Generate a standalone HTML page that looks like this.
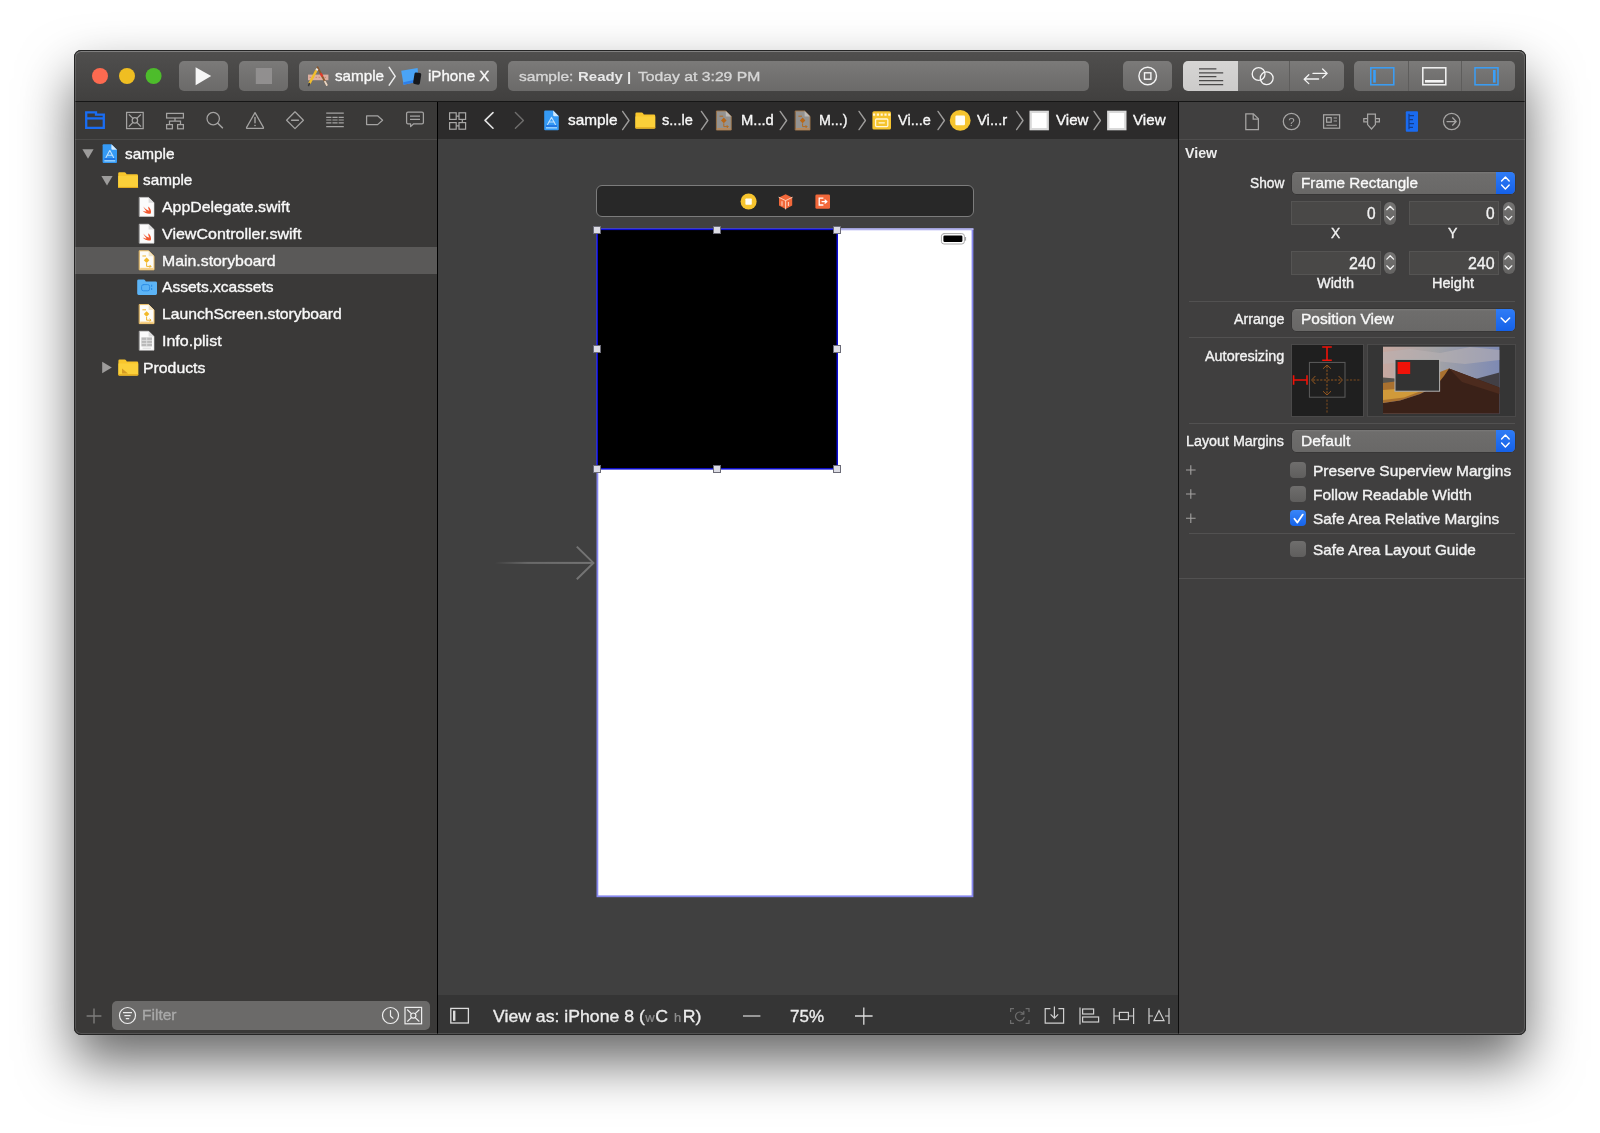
<!DOCTYPE html>
<html lang="en">
<head>
<meta charset="utf-8">
<title>sample — Main.storyboard</title>
<style>
html,body{margin:0;padding:0}
body{width:1600px;height:1133px;background:#fff;position:relative;overflow:hidden;font-family:"Liberation Sans",sans-serif}
#root{position:absolute;left:0;top:0;width:1600px;height:1133px;will-change:transform}
.a,.t,svg{position:absolute}
.t{white-space:pre;transform-origin:0 50%;-webkit-text-stroke:.35px currentColor}
#shadow{left:74px;top:50px;width:1452px;height:985px;border-radius:7px;
 box-shadow:0 27px 54px rgba(0,0,0,.6)}
#win{left:74px;top:50px;width:1452px;height:985px;border-radius:7px;overflow:hidden;background:#3a3938}
#win>*{position:absolute}
#frame{left:74px;top:50px;width:1452px;height:985px;border-radius:7px;box-sizing:border-box;border:1px solid #252525;box-shadow:inset 0 1px 0 rgba(255,255,255,.16),inset 0 0 0 1px rgba(255,255,255,.14);pointer-events:none}
#tb{left:0;top:0;width:1452px;height:51px;background:linear-gradient(#504f4e,#41403f)}
#tbline{left:0;top:51px;width:1452px;height:1px;background:#161616}
.btn{border-radius:5px;background:linear-gradient(#7b7a79,#6b6a69);top:11px;height:30px}
.seg{top:11px;height:30px;background:linear-gradient(#7b7a79,#6b6a69)}
#nav{left:0;top:52px;width:363px;height:933px;background:#3a3938}
#navline{left:1px;top:89px;width:362px;height:1px;background:#4b4a49}
#sel{left:1px;top:197px;width:362px;height:27px;background:#5a5958}
#div1{left:363px;top:52px;width:1px;height:933px;background:#000}
#jump{left:364px;top:52px;width:740px;height:37px;background:#2c2b2b}
#canvas{left:364px;top:89px;width:740px;height:856px;background:#404040}
#bbar{left:364px;top:945px;width:740px;height:40px;background:#353535}
#div2{left:1104px;top:52px;width:1px;height:933px;background:#0c0c0c}
#insp{left:1105px;top:52px;width:347px;height:933px;background:#403f3f}
.hl{height:1px;background:#525151}
.pop{height:21.6px;border-radius:4.5px;background:linear-gradient(#7b7a79 0,#6e6d6c 2px,#696867);overflow:hidden;box-shadow:0 0 0 .5px rgba(0,0,0,.25)}
.pop i{position:absolute;right:0;top:0;width:19px;height:100%;background:linear-gradient(#2f7cf6,#1561e8)}
.fld{height:24px;background:#494847;box-shadow:inset 0 0 0 1px #555453,inset 0 -1px 0 #646362}
.stp{width:12px;height:22.5px;border-radius:6px;background:linear-gradient(#757473,#636261)}
.cb{width:16px;height:16px;border-radius:4px;background:linear-gradient(#6f6e6d,#5f5e5d)}
.cb.on{background:linear-gradient(#3a86f8,#1563ea)}
.hd{width:8px;height:8px;box-sizing:border-box;background:#dcdce4;border:1px solid #6c6c78}

</style>
</head>
<body>
<div id="root">
<div id="shadow" class="a"></div>
<div id="win" class="a">
  <div id="tb"></div>
  <div id="tbline"></div>
  <div class="btn" style="left:105px;width:49px"></div>
  <div class="btn" style="left:165px;width:49px"></div>
  <div class="btn" style="left:225px;width:198px"></div>
  <div class="btn" style="left:434px;width:581px"></div>
  <div class="btn" style="left:1049px;width:49px"></div>
  <div class="seg" style="left:1109px;width:55px;border-radius:5px 0 0 5px;background:linear-gradient(#d6d5d4,#cccbca)"></div>
  <div class="seg" style="left:1164px;width:51px"></div>
  <div class="seg" style="left:1215px;width:55px;border-radius:0 5px 5px 0;box-shadow:inset 1px 0 0 #5e5d5c"></div>
  <div class="seg" style="left:1280px;width:54px;border-radius:5px 0 0 5px"></div>
  <div class="seg" style="left:1334px;width:53px;box-shadow:inset 1px 0 0 #5e5d5c"></div>
  <div class="seg" style="left:1387px;width:54px;border-radius:0 5px 5px 0;box-shadow:inset 1px 0 0 #5e5d5c"></div>

  <div id="nav"></div>
  <div id="navline"></div>
  <div id="sel"></div>
  <div class="btn" style="left:38px;top:951px;width:318px;height:29px;background:#6b6a69"></div>
  <div id="div1"></div>

  <div id="jump"></div>
  <div id="canvas"></div>
  <div id="bbar"></div>

  <div id="div2"></div>
  <div id="insp"></div>
  <div class="hl" style="left:1105px;top:89px;width:347px;background:#4f4e4e"></div>
  <div class="hl" style="left:1115px;top:251px;width:326px"></div>
  <div class="hl" style="left:1115px;top:287px;width:326px"></div>
  <div class="hl" style="left:1115px;top:373px;width:326px"></div>
  <div class="hl" style="left:1115px;top:483px;width:326px"></div>
  <div class="hl" style="left:1105px;top:528px;width:347px"></div>

  <div class="pop" style="left:1217.5px;top:122.2px;width:223px"><i></i></div>
  <div class="pop" style="left:1217.5px;top:259.2px;width:223px"><i></i></div>
  <div class="pop" style="left:1217.5px;top:380.2px;width:223px"><i></i></div>

  <div class="fld" style="left:1217px;top:151.2px;width:90px"></div>
  <div class="stp" style="left:1310px;top:152px"></div>
  <div class="fld" style="left:1334.5px;top:151.2px;width:90.5px"></div>
  <div class="stp" style="left:1429px;top:152px"></div>
  <div class="fld" style="left:1217px;top:200.6px;width:90px"></div>
  <div class="stp" style="left:1310px;top:201.5px"></div>
  <div class="fld" style="left:1334.5px;top:200.6px;width:90.5px"></div>
  <div class="stp" style="left:1429px;top:201.5px"></div>

  <div style="left:1217.5px;top:295px;width:71px;height:70.5px;background:#1f1f1f;box-shadow:0 0 0 1px #4a4949"></div>
  <div style="left:1293.5px;top:295px;width:147px;height:70.5px;background:#353535;box-shadow:0 0 0 1px #4a4949"></div>

  <div class="cb" style="left:1216px;top:412px"></div>
  <div class="cb" style="left:1216px;top:436px"></div>
  <div class="cb on" style="left:1216px;top:460.2px"></div>
  <div class="cb" style="left:1216px;top:490.6px"></div>

  <!-- storyboard scene -->
  <div style="left:522px;top:135.2px;width:377.6px;height:32.3px;box-sizing:border-box;border-radius:6px;background:#282828;border:1.2px solid #7c7c7c"></div>
  <svg style="left:-74px;top:-50px" width="1600" height="1133" viewBox="0 0 1600 1133" fill="none">
   <rect x="597.4" y="229.3" width="375.1" height="667" fill="#fff" stroke="#8687ee" stroke-width="1.8"/>
   <path d="M838 229.1 H973.4" stroke="#b4b4ea" stroke-width="1.6"/>
   <rect x="597.25" y="229.35" width="240" height="239.5" fill="#000" stroke="#0b0bd4" stroke-width="1.5"/>
  </svg>
  <div class="hd" style="left:519px;top:175.5px"></div>
  <div class="hd" style="left:639px;top:175.5px"></div>
  <div class="hd" style="left:759px;top:175.5px"></div>
  <div class="hd" style="left:519px;top:295.4px"></div>
  <div class="hd" style="left:759px;top:295.4px"></div>
  <div class="hd" style="left:519px;top:414.5px"></div>
  <div class="hd" style="left:639px;top:414.5px"></div>
  <div class="hd" style="left:759px;top:414.5px"></div>
</div>
<div id="frame" class="a"></div>
<svg class="a" style="left:0;top:0" width="1600" height="1133" viewBox="0 0 1600 1133" fill="none" stroke-linecap="round" stroke-linejoin="round">
<!-- traffic lights -->
<circle cx="100" cy="76" r="8" fill="#fd6a50"/>
<circle cx="127" cy="76" r="8" fill="#efbe22"/>
<circle cx="153.6" cy="76" r="8" fill="#4dbc2b"/>
<!-- run / stop -->
<path d="M195.6 67.2 L211.2 76.1 L195.6 85.2 Z" fill="#f6f6f6"/>
<rect x="255.8" y="68" width="16.2" height="16" fill="#918f8f"/>
<!-- scheme: xcode app icon -->
<g>
 <rect x="308" y="74.6" width="20.4" height="5.6" fill="#dcae9f"/>
 <path d="M309.6 77.4 H327" stroke="#c4897a" stroke-width="1" stroke-dasharray="1.4 1.6" stroke-linecap="butt"/>
 <path d="M317.6 67.4 L326.6 84.6" stroke="#8a5a30" stroke-width="2"/>
 <path d="M320.6 73.2 L322.4 76.6" stroke="#e23a2a" stroke-width="2.2" stroke-linecap="butt"/>
 <path d="M325 81.6 L326.8 85" stroke="#e8d8c8" stroke-width="1.8"/>
 <path d="M316.4 70.4 L309.4 83.6" stroke="#f1bd2c" stroke-width="2.4" stroke-linecap="butt"/>
 <path d="M317.4 68.6 L316.4 70.4" stroke="#f4ece0" stroke-width="2.2" stroke-linecap="butt"/>
 <path d="M309.4 83.6 L308.6 85.4" stroke="#3a3a3a" stroke-width="1.6"/>
</g>
<path d="M389.2 67.4 L395.2 76.3 L389.2 85.2" stroke="#ececec" stroke-width="1.5"/>
<!-- device icon -->
<g>
 <path d="M401.2 70.8 L417.6 68 L418.6 81.6 L403.6 84.8 Z" fill="#4aa4f6"/>
 <path d="M403.6 84.8 L418.6 81.6 L418.4 79 L403.2 82.2 Z" fill="#2f7fe8"/>
 <rect x="413.8" y="72.6" width="6.8" height="11.8" rx="1.6" fill="#17191d" transform="rotate(9 417 78.5)"/>
</g>
<!-- library -->
<circle cx="1147.7" cy="76" r="8.8" stroke="#f4f4f4" stroke-width="1.4"/>
<rect x="1144.5" y="72.8" width="6.4" height="6.4" stroke="#f4f4f4" stroke-width="1.4" stroke-linejoin="miter"/>
<!-- editor seg -->
<g stroke="#4b4a4a" stroke-width="1.3" stroke-linecap="butt">
 <path d="M1199 68.8 H1216.4 M1199 72.8 H1223.2 M1199 76.7 H1216.4 M1199 80.7 H1223.2 M1199 84.7 H1223.2"/>
</g>
<circle cx="1258.6" cy="74" r="6.4" stroke="#f4f4f4" stroke-width="1.3"/>
<circle cx="1266.7" cy="78.2" r="6.4" stroke="#f4f4f4" stroke-width="1.3"/>
<g stroke="#f4f4f4" stroke-width="1.3">
 <path d="M1313 73.4 H1327 M1322.6 69 L1327.2 73.4 L1322.6 77.8"/>
 <path d="M1318.6 79 H1304.4 M1308.8 74.8 L1304.2 79.2 L1308.8 83.6"/>
</g>
<!-- panel seg -->
<g stroke-linejoin="miter" stroke-linecap="butt">
 <rect x="1370.8" y="67.8" width="23" height="17" stroke="#3a9ff8" stroke-width="1.5"/>
 <rect x="1373.2" y="70" width="2.6" height="12.6" fill="#3a9ff8"/>
 <rect x="1422.8" y="67.8" width="23" height="17" stroke="#f4f4f4" stroke-width="1.5"/>
 <rect x="1425" y="80" width="18.6" height="2.6" fill="#f4f4f4"/>
 <rect x="1475" y="67.8" width="23" height="17" stroke="#3a9ff8" stroke-width="1.5"/>
 <rect x="1493" y="70" width="2.6" height="12.6" fill="#3a9ff8"/>
</g>
</svg>

<svg class="a" style="left:0;top:0" width="1600" height="1133" viewBox="0 0 1600 1133" fill="none" stroke-linecap="round" stroke-linejoin="round">
<defs>
 <g id="doc">
  <path d="M0.6 0.4 H9.6 L15 5.8 V19.4 H0.6 Z" fill="#fbfbfb" stroke="#d9d9d9" stroke-width=".6"/>
  <path d="M9.6 0.4 V5.8 H15 Z" fill="#dcdcdc"/>
 </g>
 <g id="swift">
  <use href="#doc"/>
  <path d="M4.2 9.6 C6.4 12.2 8.6 13.4 10.4 13.8 C9.6 12.4 9 11 9.4 9.4 C11.4 11.4 12.6 14 11.8 16.4 C10 17.2 6 16.8 3.6 13.8 C5 14.6 6.6 14.8 7.6 14.4 C6.2 13 5 11.4 4.2 9.6 Z" fill="#f2552c"/>
 </g>
 <g id="sb">
  <path d="M0.6 0.4 H9.6 L15 5.8 V19.4 H0.6 Z" fill="#fdfcf8" stroke="#f3c56b" stroke-width="1"/>
  <path d="M9.6 0.4 V5.8 H15 Z" fill="#f0e3c6"/>
  <path d="M3.4 5.6 H7 M7.6 12.8 V16 H12 M10.6 14.6 L12 16 L10.6 17.4" stroke="#f0b62f" stroke-width="1" stroke-linecap="butt"/>
  <path d="M7.6 7 L10.4 9.8 L7.6 12.6 L4.8 9.8 Z" fill="#f2b929"/>
  <rect x="1.2" y="17.4" width="13.2" height="1.6" fill="#f6cf85"/>
 </g>
 <g id="fold">
  <path d="M0.4 1.6 Q0.4 0.4 1.6 0.4 H6.6 Q7.6 0.4 8.2 1.4 L8.8 2.4 H19 Q20.2 2.4 20.2 3.6 V15 Q20.2 16.2 19 16.2 H1.6 Q0.4 16.2 0.4 15 Z" fill="#f8c62c"/>
  <path d="M0.4 4.2 H20.2 V15 Q20.2 16.2 19 16.2 H1.6 Q0.4 16.2 0.4 15 Z" fill="#fbd03a"/>
  <path d="M0.6 15.6 H20" stroke="#e0a61c" stroke-width="1"/>
 </g>
 <path id="tri" d="M0 0 H11.2 L5.6 9.6 Z" fill="#9d9c9b"/>
</defs>
<!-- nav tab icons -->
<g stroke="#1a6df2" stroke-width="2.3" stroke-linejoin="miter" stroke-linecap="butt">
 <path d="M86.2 113.2 V127.8 H103.8 V114.6 H96 V112.4 H86.2 Z"/>
 <path d="M86.2 118.4 H103.8"/>
</g>
<g stroke="#a4a3a2" stroke-width="1.25">
 <rect x="126.6" y="112.4" width="16.6" height="16.2" stroke-linejoin="miter"/>
 <circle cx="134.9" cy="120.4" r="2.7"/>
 <path d="M129.2 114.8 L133 118.4 M140.6 114.8 L136.8 118.4 M129.2 126.2 L133 122.4 M140.6 126.2 L136.8 122.4"/>
 <g stroke-linejoin="miter" stroke-linecap="butt">
  <rect x="166.6" y="113.4" width="16.8" height="4.6"/>
  <rect x="166.6" y="124.6" width="5.8" height="4.2"/>
  <rect x="177.6" y="124.6" width="5.8" height="4.2"/>
  <path d="M169.5 124.6 V121.2 H180.5 V124.6 M175 118 V121.2"/>
 </g>
 <circle cx="213.2" cy="118.6" r="6.2"/>
 <path d="M217.8 123.2 L222.4 127.8" stroke-width="1.6"/>
 <path d="M255 112.6 L263.4 127.4 Q263.8 128.4 262.8 128.4 H247.2 Q246.2 128.4 246.6 127.4 Z"/>
 <path d="M255 117.4 V122.8" stroke-width="1.4"/>
 <circle cx="255" cy="125.5" r=".8" fill="#a4a3a2" stroke="none"/>
 <path d="M295 111.8 L303.4 120.2 L295 128.6 L286.6 120.2 Z"/>
 <path d="M291.6 120.2 H298.4" stroke-width="1.4"/>
 <g stroke-linecap="butt" stroke-width="1.2">
  <path d="M326.2 113.2 H343.8 M326.2 126.6 H343.8"/>
  <path d="M326.2 117.3 H343.8 M326.2 120 H343.8 M326.2 122.8 H343.8" stroke-dasharray="5.2 1"/>
 </g>
 <path d="M366.6 115.8 H377.6 L382.6 120.2 L377.6 124.6 H366.6 Z"/>
 <path d="M408 112 H422 Q423.4 112 423.4 113.4 V122.4 Q423.4 123.8 422 123.8 H413.6 L410.6 126.6 V123.8 H408 Q406.6 123.8 406.6 122.4 V113.4 Q406.6 112 408 112 Z"/>
 <path d="M410 116 H420 M410 119.4 H420" stroke-linecap="butt"/>
</g>
<!-- navigator rows -->
<use href="#tri" x="82.4" y="149.2"/>
<use href="#tri" x="101.4" y="176"/>
<path d="M102.2 361.8 L111.8 367.5 L102.2 373.2 Z" fill="#9d9c9b"/>
<!-- project icon -->
<g id="proj">
 <path d="M103.6 144.2 H111.4 L117 149.8 V162 Q117 163 116 163 H103.6 Q102.6 163 102.6 162 V145.2 Q102.6 144.2 103.6 144.2 Z" fill="#359af5"/>
 <path d="M111.4 144.2 V148.8 Q111.4 149.8 112.4 149.8 H117 Z" fill="#d3eafd"/>
 <path d="M109.7 150.6 L106 157.4 M109.9 150.6 L113.6 157.4 M107 155.2 H112.6" stroke="#bfe0fc" stroke-width="1.1"/>
 <rect x="104.4" y="158.2" width="10.8" height="1.6" fill="#1d6fe0"/>
 <rect x="104.4" y="160" width="10.8" height="1.6" fill="#8ecbfb"/>
</g>
<use href="#fold" x="117.8" y="171.8"/>
<use href="#swift" x="139" y="197"/>
<use href="#swift" x="139" y="223.8"/>
<use href="#sb" x="139" y="250.4"/>
<!-- assets folder -->
<g>
 <path d="M137.2 280.8 Q137.2 279.4 138.6 279.4 H143.6 Q144.6 279.4 145.2 280.4 L145.8 281.4 H155.6 Q157 281.4 157 282.8 V293.6 Q157 295 155.6 295 H138.6 Q137.2 295 137.2 293.6 Z" fill="#5cb4f6"/>
 <rect x="141.6" y="284.6" width="8" height="6.2" rx="1.8" stroke="#2f8fe6" stroke-width="1"/>
 <path d="M151.6 284.8 V290.6" stroke="#2f8fe6" stroke-width="1.2" stroke-dasharray="2 1.2" stroke-linecap="butt"/>
</g>
<use href="#sb" x="139" y="304.2"/>
<!-- plist -->
<g>
 <use href="#doc" x="139" y="330.8"/>
 <rect x="141.4" y="337.4" width="10.6" height="9" fill="#b9b9b9"/>
 <path d="M146.7 337.4 V346.4 M141.4 340.4 H152 M141.4 343.4 H152" stroke="#e6e6e6" stroke-width=".8" stroke-linecap="butt"/>
 <path d="M143 348.2 H150.6" stroke="#cfcfcf" stroke-width=".8"/>
</g>
<use href="#fold" x="118" y="359.2"/>
<path d="M122 373.6 L122 368.4 L128 373.6 Z" fill="#c78a1c" opacity=".75"/>
<!-- filter bar -->
<path d="M94 1008.6 V1023.4 M86.6 1016 H101.4" stroke="#7d7c7b" stroke-width="1.4" stroke-linecap="butt"/>
<g stroke="#ededed" stroke-width="1.2">
 <circle cx="127.5" cy="1015.5" r="8"/>
 <path d="M123 1012.6 H132 M124.4 1015.6 H130.6 M125.8 1018.6 H129.2" stroke-linecap="butt"/>
 <circle cx="390.5" cy="1015.5" r="8"/>
 <path d="M390.5 1010.6 V1016 L393 1018.2"/>
 <rect x="405" y="1007.4" width="16.6" height="16.4" stroke-linejoin="miter"/>
 <circle cx="413.3" cy="1015.6" r="2.6"/>
 <path d="M407.6 1010 L411.4 1013.6 M419 1010 L415.2 1013.6 M407.6 1021.2 L411.4 1017.6 M419 1021.2 L415.2 1017.6"/>
</g>
</svg>

<svg class="a" style="left:0;top:0" width="1600" height="1133" viewBox="0 0 1600 1133" fill="none" stroke-linecap="round" stroke-linejoin="round">
<defs>
 <path id="chv" d="M0 0.8 L6.4 9.9 L0 19" stroke="#9d9c9b" stroke-width="1.4"/>
 <g id="sbg">
  <path d="M0.6 0.4 H9.6 L15 5.8 V19.4 H0.6 Z" fill="#949391" stroke="#a77a4c" stroke-width=".9"/>
  <path d="M9.6 0.4 V5.8 H15 Z" fill="#bdbab6"/>
  <path d="M3.4 5.6 H7 M7.6 12.8 V16 H12 M10.6 14.6 L12 16 L10.6 17.4" stroke="#b56a1e" stroke-width="1" stroke-linecap="butt"/>
  <path d="M7.6 7 L10.4 9.8 L7.6 12.6 L4.8 9.8 Z" fill="#b8681a"/>
  <rect x="1.2" y="17.4" width="13.2" height="1.6" fill="#b98a5c"/>
 </g>
 <g id="vw">
  <rect x=".5" y=".5" width="19.4" height="19.6" fill="#d9d9d9"/>
  <rect x="2.8" y="2.8" width="14.8" height="15" fill="#ffffff"/>
 </g>
</defs>
<!-- related items -->
<g stroke="#a9a8a7" stroke-width="1.2" stroke-linejoin="miter" stroke-linecap="butt">
 <rect x="449.6" y="112.8" width="6.6" height="6.6"/>
 <rect x="459" y="112.8" width="6.6" height="6.6"/>
 <rect x="449.6" y="122.6" width="6.6" height="6.6"/>
 <rect x="459" y="122.6" width="6.6" height="6.6"/>
 <path d="M456.2 116.1 H459 M456.2 125.9 H459 M462.3 119.4 V122.6"/>
</g>
<path d="M493 112.6 L485 120.4 L493 128.2" stroke="#e4e4e4" stroke-width="1.6"/>
<path d="M515.4 112.6 L523.4 120.4 L515.4 128.2" stroke="#6f6e6d" stroke-width="1.4"/>
<!-- project icon -->
<g>
 <path d="M545.2 110.6 H553.2 L558.8 116.2 V129.2 Q558.8 130.2 557.8 130.2 H545.2 Q544.2 130.2 544.2 129.2 V111.6 Q544.2 110.6 545.2 110.6 Z" fill="#359af5"/>
 <path d="M553.2 110.6 V115.2 Q553.2 116.2 554.2 116.2 H558.8 Z" fill="#d3eafd"/>
 <path d="M551.4 117.4 L547.6 124.4 M551.6 117.4 L555.4 124.4 M548.6 122 H554.4" stroke="#bfe0fc" stroke-width="1.1"/>
 <rect x="546" y="125.2" width="11" height="1.6" fill="#1d6fe0"/>
 <rect x="546" y="127" width="11" height="1.6" fill="#8ecbfb"/>
</g>
<use href="#chv" x="622.6" y="110.6"/>
<g transform="translate(635 112.2)">
  <path d="M0.4 1.6 Q0.4 0.4 1.6 0.4 H6.6 Q7.6 0.4 8.2 1.4 L8.8 2.4 H19 Q20.2 2.4 20.2 3.6 V15 Q20.2 16.2 19 16.2 H1.6 Q0.4 16.2 0.4 15 Z" fill="#f8c62c"/>
  <path d="M0.4 4.2 H20.2 V15 Q20.2 16.2 19 16.2 H1.6 Q0.4 16.2 0.4 15 Z" fill="#fbd03a"/>
  <path d="M0.6 15.6 H20" stroke="#e0a61c" stroke-width="1"/>
</g>
<use href="#chv" x="701.4" y="110.6"/>
<use href="#sbg" x="716.2" y="110.6"/>
<use href="#chv" x="780.2" y="110.6"/>
<use href="#sbg" x="795" y="110.6"/>
<use href="#chv" x="859" y="110.6"/>
<!-- scene icon -->
<g>
 <rect x="872.4" y="111.2" width="18.6" height="18.4" rx="1.6" fill="#f6c42e"/>
 <path d="M873 114.6 H890.4" stroke="#fff6d8" stroke-width="2.2" stroke-dasharray="2.2 1.6" stroke-linecap="butt"/>
 <rect x="875.6" y="119" width="12.2" height="7.6" rx="1" stroke="#fff6d8" stroke-width="1.3"/>
 <path d="M879 122.8 H884.4" stroke="#fff6d8" stroke-width="1.2"/>
</g>
<use href="#chv" x="938" y="110.6"/>
<!-- view controller icon -->
<circle cx="960.2" cy="120.4" r="10.4" fill="#f6c42e"/>
<rect x="955.4" y="115.6" width="9.6" height="9.6" rx="1.2" fill="#fffdf4"/>
<use href="#chv" x="1016.6" y="110.6"/>
<use href="#vw" x="1029" y="110.2"/>
<use href="#chv" x="1094" y="110.6"/>
<use href="#vw" x="1106.6" y="110.2"/>

<!-- scene header icons -->
<circle cx="748.6" cy="201.5" r="8" fill="#f6c42e"/>
<rect x="745.4" y="198.4" width="6.4" height="6.4" rx=".8" fill="#fffdf4"/>
<g>
 <path d="M785.6 194.2 L792.2 197.4 V205.4 L785.6 209 L779 205.4 V197.4 Z" fill="#f2683a"/>
 <path d="M779 197.4 L785.6 200.6 L792.2 197.4 M785.6 200.6 V209" stroke="#ffd9c4" stroke-width=".9"/>
 <path d="M782 201.6 V205.4 M788.4 202.4 V205.6" stroke="#ffe6d8" stroke-width=".9"/>
</g>
<g>
 <rect x="815.4" y="194.4" width="14.6" height="14.4" rx="1.4" fill="#f2683a"/>
 <path d="M823.4 198.2 H819.2 V205 H823.4" stroke="#fff" stroke-width="1.3" stroke-linecap="butt" stroke-linejoin="miter"/>
 <path d="M822 201.6 H826 M825 200 L827 201.6 L825 203.2" stroke="#fff" stroke-width="1.2"/>
</g>
<!-- battery -->
<rect x="941.4" y="233.6" width="23" height="10.4" rx="2.6" fill="#fff" stroke="#a8a8a8" stroke-width="1"/>
<rect x="943.4" y="235.6" width="19" height="6.4" rx="1.2" fill="#000"/>
<path d="M965.6 237.4 V240.2" stroke="#9a9a9a" stroke-width="1"/>
<!-- entry arrow -->
<defs><linearGradient id="ag" x1="495" x2="590" y1="0" y2="0" gradientUnits="userSpaceOnUse"><stop offset="0" stop-color="#404040"/><stop offset=".35" stop-color="#696969"/><stop offset="1" stop-color="#747474"/></linearGradient></defs>
<rect x="495" y="561.9" width="98" height="2" fill="url(#ag)"/>
<path d="M576.8 546.6 L593.4 562.9 L576.8 579.2" stroke="#747474" stroke-width="2" stroke-linecap="butt" stroke-linejoin="miter"/>

<!-- bottom bar -->
<g stroke-linejoin="miter" stroke-linecap="butt">
 <rect x="450.8" y="1008.4" width="17.6" height="14.6" stroke="#dcdcdc" stroke-width="1.3"/>
 <rect x="453" y="1010.6" width="2.4" height="10.2" fill="#dcdcdc"/>
 <path d="M743 1016 H760.4" stroke="#cfcfcf" stroke-width="1.3"/>
 <path d="M855 1016 H872.6 M863.8 1007.4 V1024.8" stroke="#dcdcdc" stroke-width="1.3"/>
</g>
<g stroke="#6d6d6d" stroke-width="1.2">
 <path d="M1010.6 1012 V1008.6 H1014 M1025.6 1008.6 H1029 V1012 M1029 1020 V1023.4 H1025.6 M1014 1023.4 H1010.6 V1020" stroke-linejoin="miter" stroke-linecap="butt"/>
 <path d="M1023.6 1014 A4.4 4.4 0 1 0 1024.2 1017.4 M1023.8 1011.4 V1014.2 H1021"/>
</g>
<g stroke="#cfcfcf" stroke-width="1.2" stroke-linejoin="miter" stroke-linecap="butt">
 <path d="M1050.4 1008.6 H1045.2 V1023.2 H1063.6 V1008.6 H1058.4"/>
 <path d="M1054.4 1006.6 V1018 M1050.6 1014.4 L1054.4 1018.2 L1058.2 1014.4"/>
 <path d="M1080 1007.4 V1024.4"/>
 <rect x="1082.6" y="1009" width="11" height="5"/>
 <rect x="1082.6" y="1017" width="16" height="5"/>
 <path d="M1114 1008 V1024 M1133.6 1008 V1024 M1114 1016 H1119.4 M1128.4 1016 H1133.6"/>
 <rect x="1119.4" y="1012.4" width="9" height="7.2"/>
 <path d="M1149 1008 V1024 M1169 1008 V1024 M1149 1016 H1153 M1165 1016 H1169"/>
 <path d="M1159 1010.6 L1164 1020.6 H1154 Z"/>
</g>
</svg>

<svg class="a" style="left:0;top:0" width="1600" height="1133" viewBox="0 0 1600 1133" fill="none" stroke-linecap="round" stroke-linejoin="round">
<defs>
 <g id="stc" stroke="#f2f2f2" stroke-width="1.25">
  <path d="M-3.4 1.7 L0 -1.7 L3.4 1.7"/>
  <path d="M-3.4 8.4 L0 11.8 L3.4 8.4"/>
 </g>
 <linearGradient id="sky" x1="0" x2="1" y1="0" y2="0"><stop offset="0" stop-color="#c7a8a0"/><stop offset=".45" stop-color="#a3a3a6"/><stop offset="1" stop-color="#7e8ab4"/></linearGradient>
</defs>
<!-- inspector tabs -->
<g stroke="#a6a5a4" stroke-width="1.25">
 <path d="M1245.8 113.8 H1253.4 L1258.4 118.8 V129.6 H1245.8 Z" stroke-linejoin="miter"/>
 <path d="M1253.2 114 V119 H1258.2" stroke-linejoin="miter" stroke-linecap="butt"/>
 <circle cx="1291.5" cy="121.5" r="8.2"/>
 <rect x="1323.6" y="114.8" width="16" height="13.4" stroke-linejoin="miter"/>
 <rect x="1326.6" y="117.6" width="4.6" height="4.6" stroke-linejoin="miter"/>
 <path d="M1333.6 118 H1337 M1333.6 121 H1337 M1326.4 125.2 H1337" stroke-linecap="butt" stroke-width="1.1"/>
 <path d="M1367.6 114 H1375.4 V124.6 L1371.5 129 L1367.6 124.6 Z" stroke-linejoin="miter"/>
 <path d="M1367.6 118.6 H1363.8 V121.8 H1367.6 M1375.4 118.6 H1379.4 V121.8 H1375.4" stroke-linejoin="miter" stroke-linecap="butt"/>
 <circle cx="1451.7" cy="121.5" r="8.2"/>
 <path d="M1447 121.5 H1456 M1452.6 117.8 L1456.2 121.5 L1452.6 125.2"/>
</g>
<text x="1291.5" y="125.6" font-family="Liberation Sans, sans-serif" font-size="11.5" fill="#a6a5a4" text-anchor="middle">?</text>
<rect x="1405.8" y="111.2" width="12.2" height="20.6" rx="1" fill="#1a6bf0"/>
<path d="M1409 113.8 V129.2 M1409 115.6 H1414 M1409 119.6 H1413 M1409 123.6 H1414 M1409 127.4 H1413" stroke="#143d8a" stroke-width="1.2" stroke-linecap="butt"/>

<!-- popup chevrons -->
<g stroke="#fff" stroke-width="1.4">
 <path d="M1501.6 181 L1505.4 177 L1509.2 181 M1501.6 185 L1505.4 189 L1509.2 185"/>
 <path d="M1501.2 318 L1505.4 322.2 L1509.6 318" stroke-width="1.6"/>
 <path d="M1501.6 439 L1505.4 435 L1509.2 439 M1501.6 443 L1505.4 447 L1509.2 443"/>
</g>
<!-- steppers -->
<use href="#stc" x="1390.2" y="208"/>
<use href="#stc" x="1508.4" y="208"/>
<use href="#stc" x="1390.2" y="257.4"/>
<use href="#stc" x="1508.4" y="257.4"/>

<!-- autoresizing -->
<rect x="1309.4" y="362.4" width="35.6" height="34.8" stroke="#5c5c5c" stroke-width="1" stroke-linejoin="miter"/>
<g stroke="#f01208" stroke-width="1.6" stroke-linecap="butt">
 <path d="M1327 346.8 V360.4 M1322.2 347 H1331.8 M1322.2 360.2 H1331.8"/>
 <path d="M1293.4 380 H1307.2 M1293.6 375.2 V384.8 M1307 375.2 V384.8"/>
</g>
<g stroke="#96581f" stroke-width="1" stroke-linecap="butt">
 <path d="M1313 380 H1341 M1327 366 V394" stroke-dasharray="2.2 1.4"/>
 <path d="M1315.4 376 L1311.6 380 L1315.4 384 M1338.6 376 L1342.4 380 L1338.6 384 M1323 368.8 L1327 365 L1331 368.8 M1323 391.2 L1327 395 L1331 391.2"/>
 <path d="M1346.4 380 H1361 M1327 399.6 V414" stroke-dasharray="2.2 1.4" opacity=".8"/>
</g>
<!-- preview image -->
<g>
 <rect x="1383" y="346.7" width="116.4" height="67.1" fill="url(#sky)"/>
 <path d="M1383 352 L1410 349 L1440 353 L1470 347 L1499.4 350 V360 L1465 364 L1425 360 L1383 364 Z" fill="#b9b2b4" opacity=".55"/>
 <path d="M1383 377.6 L1395 378.6 V384 H1383 Z" fill="#57544f"/>
 <path d="M1468 381 L1499.4 372.6 V392 L1470 388 Z" fill="#423f45"/>
 <path d="M1383 383 L1395 381.4 L1440 372 L1449 368.6 L1458 374 L1436 386 L1420 394 L1400 400.6 L1383 403 Z" fill="#a9712f"/>
 <path d="M1383 390 L1396 389 L1420 391.4 L1404 397.6 L1383 400 Z" fill="#d09a3a"/>
 <path d="M1449 368.6 L1499.4 387.6 V413.8 H1383 V403 L1400 400.6 L1420 394 L1436 386 L1444 376 Z" fill="#3a2118"/>
 <path d="M1449 368.6 L1499.4 387.6 V394 L1462 382 Z" fill="#4c2b1e"/>
 <rect x="1395" y="359.4" width="44.6" height="31.8" fill="#333333" stroke="#b3b3b3" stroke-width="1" stroke-linejoin="miter"/>
 <rect x="1397.6" y="362" width="12.6" height="12" fill="#f01208"/>
</g>
<!-- checkbox check -->
<path d="M1294.4 518.8 L1297.4 522.6 L1302.8 514.6" stroke="#fff" stroke-width="1.8"/>
<!-- plus markers -->
<g stroke="#a3a2a1" stroke-width="1.1" stroke-linecap="butt">
 <path d="M1186 470 H1195.6 M1190.8 465.2 V474.8"/>
 <path d="M1186 494 H1195.6 M1190.8 489.2 V498.8"/>
 <path d="M1186 518.2 H1195.6 M1190.8 513.4 V523"/>
</g>
</svg>

<span class="t" style="left:334.50px;top:66px;font-size:15px;line-height:19px;color:#f8f8f8;transform:scaleX(1.0153)">sample</span>
<span class="t" style="left:427.50px;top:66px;font-size:15px;line-height:19px;color:#f8f8f8;transform:scaleX(1.0084)">iPhone X</span>
<span class="t" style="left:518.60px;top:67px;font-size:13.5px;line-height:17px;color:#d6d6d6;transform:translateY(0.80px) scaleX(1.1506)">sample:</span>
<span class="t" style="left:577.70px;top:67px;font-size:13.5px;line-height:17px;color:#e8e8e8;transform:translateY(0.80px) scaleX(1.1090);font-weight:700;-webkit-text-stroke:0px currentColor">Ready |</span>
<span class="t" style="left:637.50px;top:67px;font-size:13.5px;line-height:17px;color:#d6d6d6;transform:translateY(0.80px) scaleX(1.1641)">Today at 3:29 PM</span>
<span class="t" style="left:124.60px;top:143px;font-size:15px;line-height:19px;color:#f8f8f8;transform:translateY(0.50px) scaleX(1.0257)">sample</span>
<span class="t" style="left:143.20px;top:170px;font-size:15px;line-height:19px;color:#f8f8f8;transform:translateY(0.25px) scaleX(1.0215)">sample</span>
<span class="t" style="left:162.00px;top:197px;font-size:15px;line-height:19px;color:#f8f8f8;transform:scaleX(1.0570)">AppDelegate.swift</span>
<span class="t" style="left:162.00px;top:223px;font-size:15px;line-height:19px;color:#f8f8f8;transform:translateY(0.75px) scaleX(1.0673)">ViewController.swift</span>
<span class="t" style="left:162.00px;top:250px;font-size:15px;line-height:19px;color:#f8f8f8;transform:translateY(0.50px) scaleX(1.0561)">Main.storyboard</span>
<span class="t" style="left:162.00px;top:277px;font-size:15px;line-height:19px;color:#f8f8f8;transform:translateY(0.25px) scaleX(1.0377)">Assets.xcassets</span>
<span class="t" style="left:162.00px;top:304px;font-size:15px;line-height:19px;color:#f8f8f8;transform:scaleX(1.0467)">LaunchScreen.storyboard</span>
<span class="t" style="left:162.00px;top:330px;font-size:15px;line-height:19px;color:#f8f8f8;transform:translateY(0.75px) scaleX(1.0667)">Info.plist</span>
<span class="t" style="left:143.20px;top:357px;font-size:15px;line-height:19px;color:#f8f8f8;transform:translateY(0.50px) scaleX(1.0540)">Products</span>
<span class="t" style="left:142.00px;top:1005px;font-size:15px;line-height:19px;color:#a9a9a9;transform:translateY(0.20px) scaleX(1.0347)">Filter</span>
<span class="t" style="left:567.60px;top:110px;font-size:15px;line-height:19px;color:#f8f8f8;transform:translateY(0.20px) scaleX(1.0257)">sample</span>
<span class="t" style="left:661.60px;top:110px;font-size:15px;line-height:19px;color:#f8f8f8;transform:translateY(0.20px) scaleX(0.9720)">s...le</span>
<span class="t" style="left:740.60px;top:110px;font-size:15px;line-height:19px;color:#f8f8f8;transform:translateY(0.20px) scaleX(0.9837)">M...d</span>
<span class="t" style="left:819.40px;top:110px;font-size:15px;line-height:19px;color:#f8f8f8;transform:translateY(0.20px) scaleX(0.9500)">M...)</span>
<span class="t" style="left:898.00px;top:110px;font-size:15px;line-height:19px;color:#f8f8f8;transform:translateY(0.20px) scaleX(0.9669)">Vi...e</span>
<span class="t" style="left:976.80px;top:110px;font-size:15px;line-height:19px;color:#f8f8f8;transform:translateY(0.20px) scaleX(0.9876)">Vi...r</span>
<span class="t" style="left:1055.80px;top:110px;font-size:15px;line-height:19px;color:#f8f8f8;transform:translateY(0.20px) scaleX(1.0047)">View</span>
<span class="t" style="left:1133.20px;top:110px;font-size:15px;line-height:19px;color:#f8f8f8;transform:translateY(0.20px) scaleX(1.0109)">View</span>
<span class="t" style="left:1185.30px;top:143px;font-size:14px;line-height:18px;color:#ececec;transform:translateY(0.50px) scaleX(1.0172);font-weight:700;-webkit-text-stroke:0px currentColor">View</span>
<span class="t" style="left:1250.00px;top:174px;font-size:14px;line-height:18px;color:#f2f2f2;transform:translateY(0.40px) scaleX(0.9791)">Show</span>
<span class="t" style="left:1301.20px;top:174px;font-size:14px;line-height:18px;color:#f8f8f8;transform:translateY(0.40px) scaleX(1.0895)">Frame Rectangle</span>
<span class="t" style="left:1366.60px;top:203px;font-size:16px;line-height:19px;color:#f2f2f2;transform:translateY(0.80px) scaleX(0.9656)">0</span>
<span class="t" style="left:1485.60px;top:203px;font-size:16px;line-height:19px;color:#f2f2f2;transform:translateY(0.80px) scaleX(0.9656)">0</span>
<span class="t" style="left:1330.80px;top:224px;font-size:14px;line-height:18px;color:#f2f2f2;transform:translateY(0.40px) scaleX(0.9846)">X</span>
<span class="t" style="left:1448.20px;top:224px;font-size:14px;line-height:18px;color:#f2f2f2;transform:translateY(0.40px) scaleX(1.0060)">Y</span>
<span class="t" style="left:1348.70px;top:253px;font-size:16px;line-height:19px;color:#f2f2f2;transform:translateY(0.60px) scaleX(0.9924)">240</span>
<span class="t" style="left:1467.60px;top:253px;font-size:16px;line-height:19px;color:#f2f2f2;transform:translateY(0.60px) scaleX(0.9961)">240</span>
<span class="t" style="left:1317.00px;top:274px;font-size:14px;line-height:18px;color:#f2f2f2;transform:translateY(0.10px) scaleX(1.0336)">Width</span>
<span class="t" style="left:1431.80px;top:274px;font-size:14px;line-height:18px;color:#f2f2f2;transform:translateY(0.10px) scaleX(1.0378)">Height</span>
<span class="t" style="left:1233.80px;top:310px;font-size:14px;line-height:18px;color:#f2f2f2;transform:translateY(0.30px) scaleX(1.0138)">Arrange</span>
<span class="t" style="left:1301.20px;top:310px;font-size:14px;line-height:18px;color:#f8f8f8;transform:translateY(0.10px) scaleX(1.1074)">Position View</span>
<span class="t" style="left:1205.00px;top:347px;font-size:14px;line-height:18px;color:#f2f2f2;transform:translateY(0.20px) scaleX(1.0292)">Autoresizing</span>
<span class="t" style="left:1186.40px;top:431px;font-size:14px;line-height:18px;color:#f2f2f2;transform:translateY(0.90px) scaleX(1.0217)">Layout Margins</span>
<span class="t" style="left:1301.20px;top:431px;font-size:14px;line-height:18px;color:#f8f8f8;transform:translateY(0.70px) scaleX(1.1136)">Default</span>
<span class="t" style="left:1313.20px;top:461px;font-size:14.5px;line-height:18px;color:#f2f2f2;transform:translateY(0.80px) scaleX(1.0693)">Preserve Superview Margins</span>
<span class="t" style="left:1313.20px;top:485px;font-size:14.5px;line-height:18px;color:#f2f2f2;transform:translateY(0.80px) scaleX(1.0650)">Follow Readable Width</span>
<span class="t" style="left:1313.20px;top:510px;font-size:14.5px;line-height:18px;color:#f2f2f2;transform:scaleX(1.0597)">Safe Area Relative Margins</span>
<span class="t" style="left:1313.20px;top:540px;font-size:14.5px;line-height:18px;color:#f2f2f2;transform:translateY(0.60px) scaleX(1.0573)">Safe Area Layout Guide</span>
<span class="t" style="left:493.20px;top:1005px;font-size:17px;line-height:21px;color:#ececec;transform:translateY(0.50px) scaleX(1.0384)">View as: iPhone 8 (<span style="font-size:12.5px;color:#8c8c8c;margin:0 .6px 0 .4px;-webkit-text-stroke:.2px #8c8c8c">w</span>C <span style="font-size:12.5px;color:#8c8c8c;margin:0 1.6px 0 1px;-webkit-text-stroke:.2px #8c8c8c">h</span>R)</span>
<span class="t" style="left:790.20px;top:1005px;font-size:17px;line-height:21px;color:#ececec;transform:translateY(0.50px) scaleX(0.9991)">75%</span>

</div>
</body>
</html>
